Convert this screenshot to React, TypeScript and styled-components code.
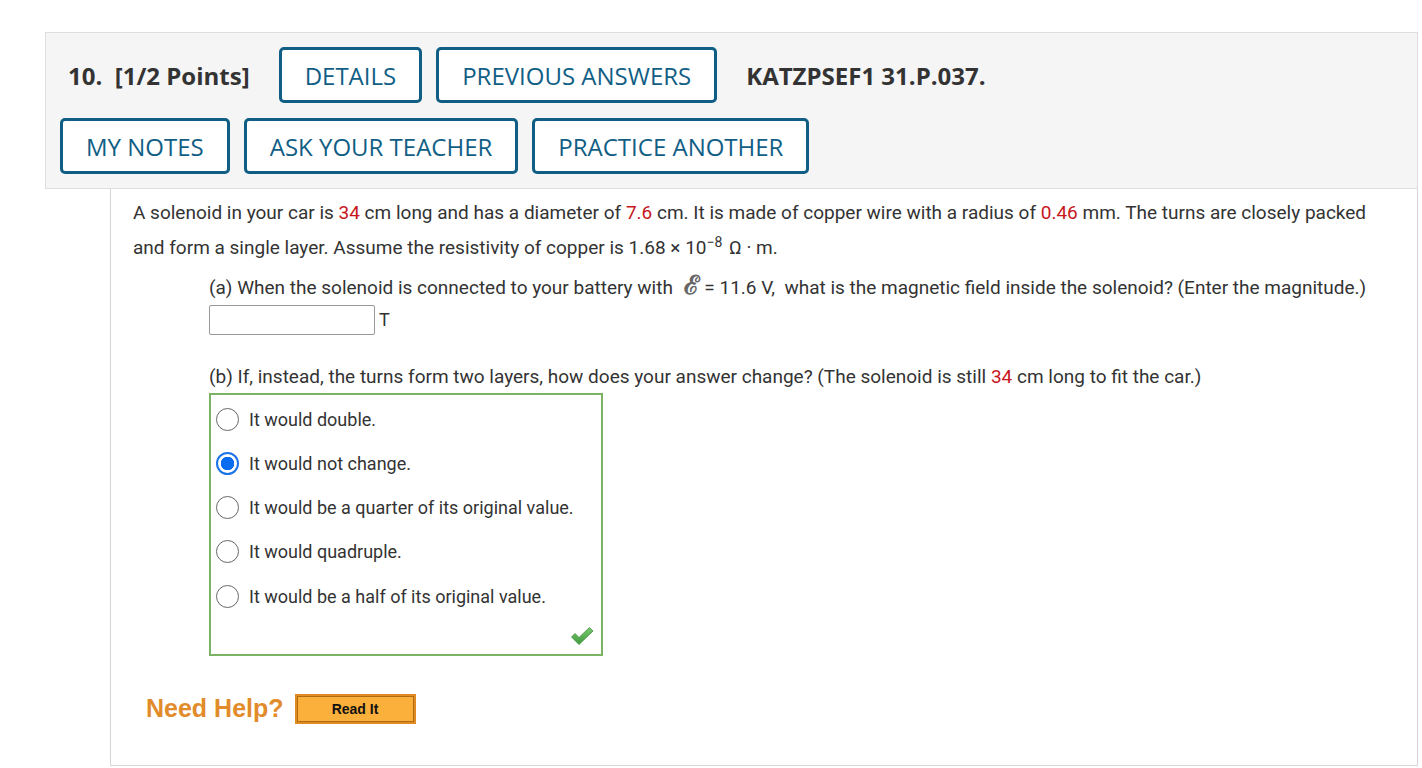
import React from 'react';
import styled, {createGlobalStyle} from 'styled-components';

const RED = '#c8161d';
const TEAL = '#115e85';

const data = {
	rowOne: ['DETAILS', 'PREVIOUS ANSWERS'],
	rowTwo: ['MY NOTES', 'ASK YOUR TEACHER', 'PRACTICE ANOTHER'],
	choices: [
		'It would double.',
		'It would not change.',
		'It would be a quarter of its original value.',
		'It would quadruple.',
		'It would be a half of its original value.',
	],
	picked: 1,
};

const GlobalStyle = createGlobalStyle`
	body {
		margin: 0;
		background: #fff;
		font-family: Roboto, "Liberation Sans", sans-serif;
		color: #333;
	}
`;

function App() {
	return (
		<_Page>
			<GlobalStyle />
			<Header>
				<HeaderRow>
					<Number>10.&nbsp; [1/2 Points]</Number>
					{data.rowOne.map((b) => (
						<ActionButton key={b}>{b}</ActionButton>
					))}
					<Code>KATZPSEF1 31.P.037.</Code>
				</HeaderRow>
				<HeaderRow>
					{data.rowTwo.map((b) => (
						<ActionButton key={b}>{b}</ActionButton>
					))}
				</HeaderRow>
			</Header>
			<Body>
				<Text>
					A solenoid in your car is <Red>34</Red> cm long and has a diameter of{' '}
					<Red>7.6</Red> cm. It is made of copper wire with a radius of{' '}
					<Red>0.46</Red> mm. The turns are closely packed and form a single layer.
					Assume the resistivity of copper is 1.68 × 10<Sup>−8</Sup> Ω · m.
				</Text>
				<Part>
					<PartText>
						(a) When the solenoid is connected to your battery with{' '}
						<Emf>ℰ</Emf> = 11.6 V,&nbsp; what is the magnetic field inside the
						solenoid? (Enter the magnitude.)
					</PartText>
					<AnswerRow>
						<AnswerInput type="text" />
						<Unit>T</Unit>
					</AnswerRow>
				</Part>
				<Part>
					<PartText>
						(b) If, instead, the turns form two layers, how does your answer change?
						(The solenoid is still <Red>34</Red> cm long to fit the car.)
					</PartText>
					<ChoiceBox>
						{data.choices.map((c, i) => (
							<Choice key={c}>
								<Radio checked={i === data.picked} />
								<span>{c}</span>
							</Choice>
						))}
						<CheckMark>
							<svg width="24" height="20" viewBox="0 0 24 20">
								<defs>
									<linearGradient id="ok" x1="0" y1="0" x2="0" y2="1">
										<stop offset="0" stopColor="#7cc873" />
										<stop offset="1" stopColor="#3f9a3a" />
									</linearGradient>
								</defs>
								<path
									d="M1.5 11 L5 7.5 L9 11.5 L19.5 1.5 L23 5 L9 18.5 Z"
									fill="url(#ok)"
									stroke="#3c8f37"
									strokeWidth="0.8"
									strokeLinejoin="round"
								/>
							</svg>
						</CheckMark>
					</ChoiceBox>
				</Part>
				<Help>
					<HelpLabel>Need Help?</HelpLabel>
					<ReadIt>Read It</ReadIt>
				</Help>
			</Body>
		</_Page>
	);
}

export default App;

const _Page = styled.div`
	padding: 32px 4px 4px 45px;
	display: flex;
	flex-direction: column;
`;

const Header = styled.div`
	background: #f5f5f5;
	border: 1px solid #dedede;
	padding: 14px 0 14px 14px;
	display: flex;
	flex-direction: column;
	gap: 15px;
	font-family: "Open Sans", "Liberation Sans", sans-serif;
`;

const HeaderRow = styled.div`
	display: flex;
	align-items: center;
	gap: 14px;
`;

const Number = styled.div`
	font-size: 24px;
	font-weight: 700;
	color: #333;
	margin: 0 15px 0 8px;
`;

const Code = styled.div`
	font-size: 24px;
	font-weight: 700;
	color: #333;
	margin-left: 15px;
`;

const ActionButton = styled.button`
	height: 56px;
	box-sizing: border-box;
	padding: 0 23px;
	border: 3px solid ${TEAL};
	border-radius: 5px;
	background: #fff;
	color: ${TEAL};
	font-family: "Open Sans", "Liberation Sans", sans-serif;
	font-size: 24px;
	font-weight: 500;
`;

const Body = styled.div`
	margin-left: 65px;
	border: 1px solid #d6d6d6;
	border-top: none;
	padding: 6px 40px 39px 22px;
	font-size: 19px;
	line-height: 35px;
`;

const Text = styled.p`
	margin: 0;
`;

const Red = styled.span`
	color: ${RED};
`;

const Sup = styled.sup`
	font-size: 14px;
	line-height: 0;
	vertical-align: 7px;
	margin-right: 2px;
`;

const Part = styled.div`
	margin: 3px 0 0 76px;
`;

const PartText = styled.p`
	margin: 0;
`;

const Emf = styled.span`
	font-family: "DejaVu Serif", serif;
	font-size: 26px;
	font-weight: 700;
	color: #666;
	margin-left: 6px;
`;

const AnswerRow = styled.div`
	display: flex;
	align-items: center;
	gap: 4px;
	height: 30px;
	margin-bottom: 24px;
`;

const AnswerInput = styled.input`
	width: 166px;
	height: 30px;
	box-sizing: border-box;
	border: 1px solid #999;
	border-radius: 2px;
	margin: 0;
`;

const Unit = styled.span`
	font-size: 18px;
	line-height: 30px;
`;

const ChoiceBox = styled.div`
	width: 394px;
	box-sizing: border-box;
	border: 2px solid #7cb362;
	padding: 2px 8px 8px 5px;
	margin-top: -1px;
	display: flex;
	flex-direction: column;
	position: relative;
	height: 263px;
`;

const Choice = styled.div`
	display: flex;
	align-items: center;
	gap: 10px;
	height: 44.25px;
	font-size: 18px;
`;

const Radio = styled.span<{checked: boolean}>`
	width: 23px;
	height: 23px;
	box-sizing: border-box;
	border-radius: 50%;
	border: ${(p) => (p.checked ? '2px solid #1a73e8' : '1.5px solid #666')};
	background: ${(p) =>
		p.checked ? 'radial-gradient(circle, #0a6cf0 0 6.5px, #fff 7px)' : '#fff'};
	flex-shrink: 0;
`;

const CheckMark = styled.div`
	position: absolute;
	right: 7px;
	bottom: 8px;
	display: flex;
`;

const Help = styled.div`
	display: flex;
	align-items: center;
	gap: 11px;
	margin: 35px 0 0 13px;
`;

const HelpLabel = styled.span`
	font-family: "Liberation Sans", Arial, sans-serif;
	font-size: 25px;
	font-weight: 700;
	color: #e28b2b;
`;

const ReadIt = styled.button`
	width: 121px;
	height: 30px;
	border: 2px solid #e08a24;
	box-shadow: inset 0 0 0 1px #b06a10;
	background: #fbb03b;
	font-family: "Liberation Sans", Arial, sans-serif;
	font-size: 14px;
	font-weight: 700;
	color: #111;
	padding: 0;
`;
